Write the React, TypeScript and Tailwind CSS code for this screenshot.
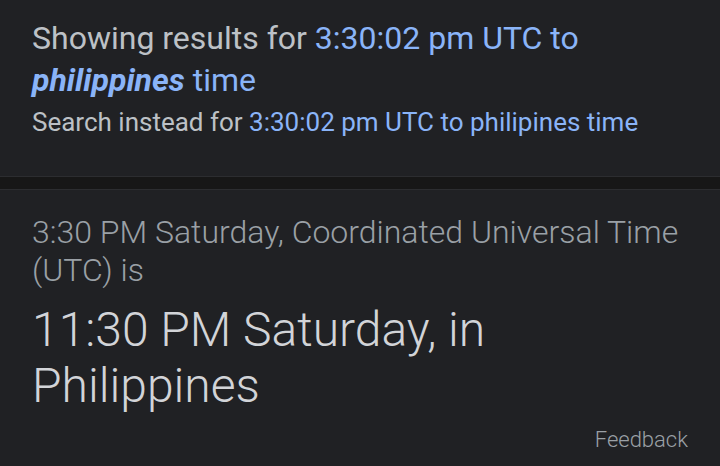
export default function App() {
  return (
    <div
      className="w-[720px] h-[466px] overflow-hidden bg-[#202124] text-[#bdc1c6]"
      style={{ fontFamily: 'Roboto, "Noto Sans", sans-serif' }}
    >
      {/* Spelling correction */}
      <div className="px-8 pt-[17px] pb-[37px]">
        <p className="text-[32px] leading-[42px]">
          Showing results for{' '}
          <span className="text-[#8ab4f8]">
            3:30:02 pm UTC to <b className="font-bold italic">philippines</b> time
          </span>
        </p>
        <p className="text-[26px] leading-[34px] mt-[4px]">
          Search instead for{' '}
          <span className="text-[#8ab4f8]">3:30:02 pm UTC to philipines time</span>
        </p>
      </div>

      {/* Separator */}
      <div className="border-y border-[#2c2d30] bg-[#171717] h-[14px]" />

      {/* Time conversion card */}
      <div className="px-8 pt-[23px]">
        <p className="text-[32px] leading-[38px] font-light text-[#9aa0a6]">
          3:30 PM Saturday, Coordinated Universal Time (UTC) is
        </p>
        <p className="text-[48px] leading-[56px] font-light text-[#d2d4d8] mt-[13px]">
          11:30 PM Saturday, in Philippines
        </p>
        <div className="flex justify-end mt-[13px]">
          <span className="text-[22px] leading-[26px] font-light text-[#9aa0a6]">Feedback</span>
        </div>
      </div>
    </div>
  )
}
